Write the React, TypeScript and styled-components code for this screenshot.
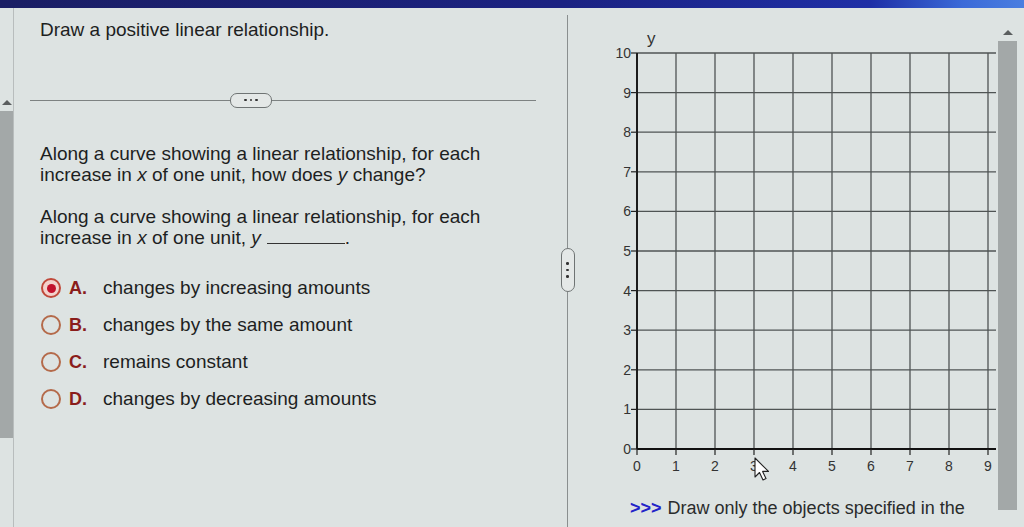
import React from 'react';
import styled, { createGlobalStyle } from 'styled-components';

const GlobalStyle = createGlobalStyle`
  html, body { margin: 0; padding: 0; }
  body {
    background: #dde3e2;
    font-family: 'Liberation Sans', Arial, sans-serif;
    color: #1d1f1f;
    overflow: hidden;
  }
`;

const Screen = styled.div`
  width: 1024px;
  height: 527px;
  display: flex;
  flex-direction: column;
  overflow: hidden;
  background: #dde3e2;
`;

const TopBar = styled.div`
  height: 8px;
  flex-shrink: 0;
  background: linear-gradient(90deg, #1a1e64 0%, #1b2282 55%, #1f2fa6 85%, #3b6ad8 94%, #4a7ee0 100%);
`;

const Body = styled.div`
  flex: 1;
  display: flex;
  min-height: 0;
`;

const Rail = styled.div<{ $side: 'left' | 'right' }>`
  width: ${p => (p.$side === 'left' ? '14px' : '19px')};
  flex-shrink: 0;
  display: flex;
  flex-direction: column;
  align-items: center;
  box-sizing: border-box;
  padding-top: ${p => (p.$side === 'left' ? '92px' : '22px')};
  margin-right: ${p => (p.$side === 'right' ? '7px' : '0')};
  border-right: ${p => (p.$side === 'left' ? '1px solid #b8bdbd' : 'none')};
`;

const ScrollArrow = styled.div`
  width: 0;
  height: 0;
  border-left: 5px solid transparent;
  border-right: 5px solid transparent;
  border-bottom: 5px solid #5a5e5f;
  margin-bottom: 6px;
`;

const Thumb = styled.div<{ $h: number }>`
  width: 100%;
  height: ${p => p.$h}px;
  background: #a3a8a8;
`;

const LeftPanel = styled.div`
  width: 541px;
  flex-shrink: 0;
  box-sizing: border-box;
  padding: 12px 19px 0 16px;
`;

const Title = styled.div`
  margin-left: 10px;
  font-size: 19px;
  line-height: 20px;
`;

const Divider = styled.div`
  margin-top: 53px;
  display: flex;
  align-items: center;
  height: 14px;
`;

const Rule = styled.div<{ $w?: number }>`
  height: 1px;
  background: #7d8282;
  ${p => (p.$w ? `width: ${p.$w}px;` : 'flex: 1;')}
`;

const MorePill = styled.div`
  width: 40px;
  height: 13px;
  border: 1px solid #6f7474;
  border-radius: 7px;
  display: flex;
  align-items: center;
  justify-content: center;
  gap: 3px;
  background: #e4e8e7;
`;

const Dot = styled.span`
  width: 2.5px;
  height: 2.5px;
  border-radius: 50%;
  background: #333;
`;

const Para = styled.p<{ $top: number }>`
  margin: ${p => p.$top}px 0 0 10px;
  font-size: 19px;
  line-height: 21px;
`;

const Var = styled.i`
  font-style: italic;
`;

const Blank = styled.span`
  display: inline-block;
  width: 78px;
  margin-left: 6px;
  border-bottom: 1px solid #333;
  vertical-align: baseline;
`;

const Options = styled.div`
  margin-top: 28px;
  display: flex;
  flex-direction: column;
  gap: 13px;
`;

const OptionRow = styled.div`
  display: flex;
  align-items: center;
  height: 24px;
  padding-left: 11px;
`;

const Radio = styled.span<{ $on?: boolean }>`
  width: 16px;
  height: 16px;
  border-radius: 50%;
  border: 2px solid ${p => (p.$on ? '#c0493a' : '#b46a4a')};
  display: flex;
  align-items: center;
  justify-content: center;
  background: ${p => (p.$on ? '#f3d2cc' : 'transparent')};
  &::after {
    content: '';
    width: 9px;
    height: 9px;
    border-radius: 50%;
    background: ${p => (p.$on ? '#c2122c' : 'transparent')};
  }
`;

const Letter = styled.span`
  width: 34px;
  margin-left: 8px;
  font-size: 18px;
  font-weight: bold;
  color: #8a1d1b;
`;

const OptionText = styled.span`
  font-size: 19px;
`;

const Splitter = styled.div`
  width: 25px;
  flex-shrink: 0;
  display: flex;
  flex-direction: column;
  align-items: center;
  padding-top: 7px;
`;

const VLine = styled.div<{ $h?: number }>`
  width: 1px;
  background: #8a8f8f;
  ${p => (p.$h ? `height: ${p.$h}px;` : 'flex: 1;')}
`;

const HandlePill = styled.div`
  width: 12px;
  height: 42px;
  border: 1px solid #6f7474;
  border-radius: 7px;
  display: flex;
  flex-direction: column;
  align-items: center;
  justify-content: center;
  gap: 4px;
  background: #e4e8e7;
`;

const RightPanel = styled.div`
  flex: 1;
  display: flex;
  flex-direction: column;
  padding-top: 17px;
`;

const Note = styled.div`
  margin: 17px 0 0 50px;
  font-size: 18px;
  color: #2a2c2c;
`;

const Arrows = styled.span`
  color: #2323c8;
  font-weight: bold;
  margin-right: 6px;
`;

const X0 = 57;
const XS = 39;
const Y10 = 28;
const YS = 39.6;
const FONT = "'Liberation Sans', Arial, sans-serif";

const Graph = () => {
  const cols = Array.from({ length: 10 }, (_, i) => i);
  const rows = Array.from({ length: 11 }, (_, i) => i);
  const y0 = Y10 + 10 * YS;
  return (
    <svg width="418" height="456" viewBox="0 0 418 456">
      {cols.map(i => (
        <line key={'v' + i} x1={X0 + i * XS} y1={Y10} x2={X0 + i * XS} y2={y0} stroke="#4f5454" strokeWidth="1.3" />
      ))}
      {rows.map(j => (
        <line key={'h' + j} x1={X0} y1={y0 - j * YS} x2={416} y2={y0 - j * YS} stroke="#4f5454" strokeWidth="1.3" />
      ))}
      <line x1={X0} y1={Y10} x2={X0} y2={y0} stroke="#111" strokeWidth="1.8" />
      <line x1={X0} y1={y0} x2={416} y2={y0} stroke="#111" strokeWidth="1.8" />
      {rows.map(j => (
        <g key={'yl' + j}>
          <line x1={X0 - 6} y1={y0 - j * YS} x2={X0} y2={y0 - j * YS} stroke="#222" strokeWidth="1.2" />
          <text x={X0 - 6} y={y0 - j * YS + 5} textAnchor="end" fontSize="14" fill="#333" fontFamily={FONT}>{j}</text>
        </g>
      ))}
      {cols.map(i => (
        <g key={'xl' + i}>
          <line x1={X0 + i * XS} y1={y0} x2={X0 + i * XS} y2={y0 + 6} stroke="#222" strokeWidth="1.2" />
          <text x={X0 + i * XS} y={y0 + 22} textAnchor="middle" fontSize="14" fill="#333" fontFamily={FONT}>{i}</text>
        </g>
      ))}
      <text x={67} y={19} fontSize="17" fill="#333" fontFamily={FONT}>y</text>
      <path d="M175 433 L175 452 L179.5 447.5 L183 455 L186 453.6 L182.6 446.4 L188.5 446.4 Z" fill="#fff" stroke="#222" strokeWidth="1.1" strokeLinejoin="round" />
    </svg>
  );
};

export default function App() {
  return (
    <Screen>
      <GlobalStyle />
      <TopBar />
      <Body>
        <Rail $side="left">
          <ScrollArrow />
          <Thumb $h={327} />
        </Rail>
        <LeftPanel>
          <Title>Draw a positive linear relationship.</Title>
          <Divider>
            <Rule $w={200} />
            <MorePill><Dot /><Dot /><Dot /></MorePill>
            <Rule />
          </Divider>
          <Para $top={36}>
            Along a curve showing a linear relationship, for each<br />
            increase in <Var>x</Var> of one unit, how does <Var>y</Var> change?
          </Para>
          <Para $top={21}>
            Along a curve showing a linear relationship, for each<br />
            increase in <Var>x</Var> of one unit, <Var>y</Var><Blank />.
          </Para>
          <Options>
            {[
              ['A.', 'changes by increasing amounts', true],
              ['B.', 'changes by the same amount', false],
              ['C.', 'remains constant', false],
              ['D.', 'changes by decreasing amounts', false],
            ].map(([l, t, on]) => (
              <OptionRow key={l as string}>
                <Radio $on={on as boolean} />
                <Letter>{l as string}</Letter>
                <OptionText>{t as string}</OptionText>
              </OptionRow>
            ))}
          </Options>
        </LeftPanel>
        <Splitter>
          <VLine $h={233} />
          <HandlePill><Dot /><Dot /><Dot /></HandlePill>
          <VLine />
        </Splitter>
        <RightPanel>
          <Graph />
          <Note><Arrows>&gt;&gt;&gt;</Arrows>Draw only the objects specified in the</Note>
        </RightPanel>
        <Rail $side="right">
          <ScrollArrow />
          <Thumb $h={469} />
        </Rail>
      </Body>
    </Screen>
  );
}
